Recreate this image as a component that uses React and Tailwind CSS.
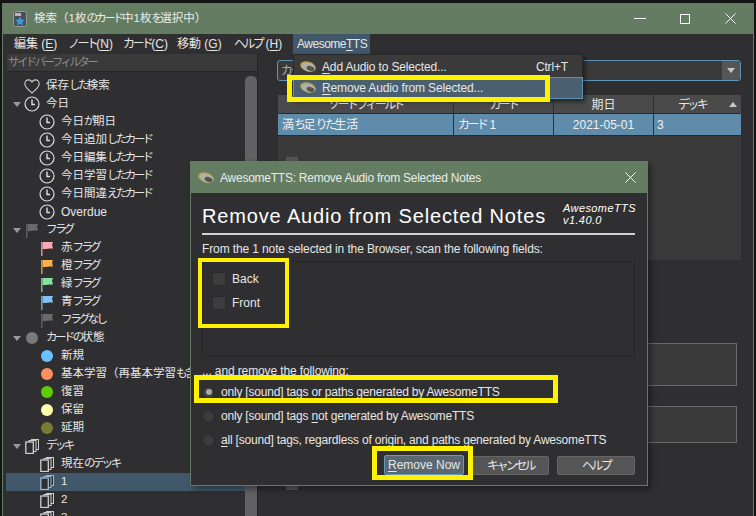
const font = "font-['Liberation_Sans','Noto_Sans_CJK_JP',sans-serif]";

function Arrow() {
  return (
    <svg width="8" height="5" viewBox="0 0 8 5">
      <path d="M0 0H8L4 5Z" fill="#9a9a9a" />
    </svg>
  );
}

function Clock() {
  return (
    <svg width="16" height="16" viewBox="0 0 16 16" fill="none" stroke="#dedede" strokeWidth="1.2">
      <circle cx="8" cy="8" r="7" />
      <path d="M8 3.500V8.500H11" strokeWidth="1.400" />
    </svg>
  );
}

function Heart() {
  return (
    <svg width="16" height="15" viewBox="0 0 16 15" fill="none" stroke="#cfcfcf" strokeWidth="1.100">
      <path d="M8 14C4 10.500 .8 8 .8 4.700 .8 2.400 2.600 .9 4.500 .9 6 .9 7.300 1.700 8 3 8.700 1.700 10 .9 11.500 .9 13.400 .9 15.200 2.400 15.200 4.700 15.200 8 12 10.500 8 14Z" />
    </svg>
  );
}

function Flag({ color }) {
  return (
    <svg width="14" height="15" viewBox="0 0 14 15">
      <rect x="1" y="1" width="1.600" height="14" fill={color} opacity="0.75" />
      <path d="M2.600 1H13L12 3.500 13 7.500C9 7 6 8.500 2.600 8Z" fill={color} />
    </svg>
  );
}

function Dot({ color }) {
  return <span className="block w-[12px] h-[12px] rounded-full" style={{ backgroundColor: color }} />;
}

function Deck({ color = "#cfcfcf" }) {
  return (
    <svg width="14" height="15" viewBox="0 0 14 15" fill="#2f2f31" stroke={color} strokeWidth="1">
      <rect x="6.500" y=".5" width="7" height="10" />
      <rect x="4" y="1.500" width="7" height="11" />
      <rect x=".8" y="3" width="7.500" height="11.500" strokeWidth="1.300" />
    </svg>
  );
}

function Speaker() {
  return (
    <svg width="17" height="14" viewBox="0 0 17 14" className="shrink-0">
      <ellipse cx="8" cy="6.500" rx="8" ry="5" transform="rotate(18 8 6.500)" fill="#b9a43e" />
      <ellipse cx="8.500" cy="7" rx="7" ry="4.200" transform="rotate(18 8.500 7)" fill="#b0b0a8" />
      <ellipse cx="10.500" cy="8.500" rx="4" ry="2.400" transform="rotate(18 10.500 8.500)" fill="#55554f" />
    </svg>
  );
}

function AppIcon() {
  return (
    <svg width="14" height="16" viewBox="0 0 14 16">
      <rect x=".5" y=".5" width="13" height="15" rx="2" fill="#4b4f55" stroke="#9a9a9a" />
      <rect x="2" y="2" width="6" height="3" fill="#b8b8b8" />
      <path d="M7 5.500 8.400 8.600 11.800 9 9.300 11.200 10 14.500 7 12.800 4 14.500 4.700 11.200 2.200 9 5.600 8.600Z" fill="#3d9be0" />
    </svg>
  );
}

// kana sits much tighter than kanji in the reference's UI font
function K({ children }) {
  return <span className="tracking-[-2.600px]">{children}</span>;
}

function Row({ level = 1, arrow, icon, children, selected }) {
  return (
    <div className={`flex items-center h-[18px] whitespace-nowrap ${level === 1 ? "pl-[33px]" : "pl-[4px]"} ${selected ? "bg-[#40586a]" : ""}`}>
      {level === 0 && (
        <span className="w-[14px] flex justify-center shrink-0">{arrow && <Arrow />}</span>
      )}
      <span className="w-[16px] flex justify-center items-center shrink-0 mr-[6px]">{icon}</span>
      <span>{children}</span>
    </div>
  );
}

function Mn({ children }) {
  return <span className="underline underline-offset-2">{children}</span>;
}

function Radio({ checked, children }) {
  return (
    <div className="flex items-center h-[24px] gap-[6px] whitespace-nowrap tracking-[-0.200px]">
      <span className="w-[13px] h-[13px] rounded-full bg-[#3c3c3c] border border-[#2a2a2a] flex items-center justify-center shrink-0">
        {checked && <span className="w-[6px] h-[6px] rounded-full bg-[#a8a8a8]" />}
      </span>
      <span>{children}</span>
    </div>
  );
}

function Check({ children }) {
  return (
    <div className="flex items-center h-[24px] gap-[6px]">
      <span className="w-[14px] h-[14px] bg-[#3c3c3c] border border-[#2a2a2a] rounded-[1px]" />
      <span>{children}</span>
    </div>
  );
}

export default function App() {
  return (
    <div className={`relative w-[756px] h-[516px] overflow-hidden bg-[#141414] pt-[3px] pl-[2px] text-[#e6e6e6] text-[12px] leading-none ${font}`}>
      {/* Browser window */}
      <div className="relative w-[752px] h-[513px] flex flex-col bg-[#2f2f31] border-x border-[#647c62]">
        <div className="h-[31px] bg-[#647c62] flex items-center pl-[10px] shrink-0">
          <AppIcon />
          <span className="ml-[7px] text-[#e8ece8] text-[11.500px]">検索（1枚<K>のカード</K>中1枚<K>を</K>選択中）</span>
          <div className="ml-auto flex items-center text-white">
            <span className="w-[12px] h-px bg-white" />
            <span className="w-[10px] h-[10px] border border-white ml-[34px]" />
            <svg className="ml-[35px] mr-[17px]" width="11" height="11" viewBox="0 0 11 11" stroke="#fff" strokeWidth="1">
              <path d="M.5 .5 10.500 10.500M10.500 .5 .5 10.500" />
            </svg>
          </div>
        </div>

        <div className="h-[20px] flex items-center shrink-0 pl-[11px] whitespace-nowrap">
          <span className="w-[54px]">編集 (<Mn>E</Mn>)</span>
          <span className="w-[55px]"><K>ノート</K>(<Mn>N</Mn>)</span>
          <span className="w-[54px]"><K>カード</K>(<Mn>C</Mn>)</span>
          <span className="w-[57px]">移動 (<Mn>G</Mn>)</span>
          <span className="w-[59px]"><K>ヘルプ</K> (<Mn>H</Mn>)</span>
          <span className="h-full flex items-center px-[4px] w-[77px] bg-[#40586a] tracking-[-0.500px]">Awesome<Mn>T</Mn>TS</span>
        </div>

        <div className="flex flex-1 min-h-0">
          {/* Sidebar */}
          <div className="w-[255px] shrink-0 flex flex-col border-r border-[#242424] overflow-hidden">
            <div className="ml-[4px] h-[18px] bg-[#3a3a3a] shrink-0 flex items-center pl-[1px] text-[#8c8c8c] text-[11.500px] border-b border-[#262626]">
              <K>サイドバーフィルター</K>
            </div>
            <div className="flex flex-1 pt-[4px] min-h-0">
              <div className="flex-1 min-w-0 ml-[3px] pt-px overflow-hidden text-[11.500px]">
                <Row level={0} icon={<Heart />}>保存<K>した</K>検索</Row>
                <Row level={0} arrow icon={<Clock />}>今日</Row>
                <Row icon={<Clock />}>今日<K>が</K>期日</Row>
                <Row icon={<Clock />}>今日追加<K>したカード</K></Row>
                <Row icon={<Clock />}>今日編集<K>したカード</K></Row>
                <Row icon={<Clock />}>今日学習<K>したカード</K></Row>
                <Row icon={<Clock />}>今日間違<K>えたカード</K></Row>
                <Row icon={<Clock />}><span className="text-[12px]">Overdue</span></Row>
                <Row level={0} arrow icon={<Flag color="#6a6a6a" />}><K>フラグ</K></Row>
                <Row icon={<Flag color="#ffa9b2" />}>赤<K>フラグ</K></Row>
                <Row icon={<Flag color="#ffb04a" />}>橙<K>フラグ</K></Row>
                <Row icon={<Flag color="#86e0a2" />}>緑<K>フラグ</K></Row>
                <Row icon={<Flag color="#82bff2" />}>青<K>フラグ</K></Row>
                <Row icon={<Flag color="#6a6a6a" />}><K>フラグなし</K></Row>
                <Row level={0} arrow icon={<Dot color="#7a7a7a" />}><K>カードの</K>状態</Row>
                <Row icon={<Dot color="#6cc0ff" />}>新規</Row>
                <Row icon={<Dot color="#ff8f5e" />}>基本学習（再基本学習<K>も</K>含む）</Row>
                <Row icon={<Dot color="#5fcc00" />}>復習</Row>
                <Row icon={<Dot color="#ffffb0" />}>保留</Row>
                <Row icon={<Dot color="#7a7a34" />}>延期</Row>
                <Row level={0} arrow icon={<Deck />}><K>デッキ</K></Row>
                <Row icon={<Deck />}>現在<K>のデッキ</K></Row>
                <Row selected icon={<Deck color="#9ab8cc" />}>1</Row>
                <Row icon={<Deck />}>2</Row>
                <Row icon={<Deck />}>3</Row>
              </div>
              <div className="w-[12px] shrink-0 bg-[#616161] rounded-t-[5px]" />
            </div>
          </div>

          {/* Card list */}
          <div className="flex-1 min-w-0 pt-[6px] pl-[19px] pr-[12px]">
            <div className="h-[21px] flex items-center bg-[#3a3a3a] border border-[#5e93b4] rounded-[3px] pl-[3px] text-[#aaa]">
              <K>カード</K>
              <span className="ml-auto w-[18px] h-full bg-[#555] flex items-center justify-center">
                <svg width="8" height="5" viewBox="0 0 8 5"><path d="M0 0H8L4 5Z" fill="#c8c8c8" /></svg>
              </span>
            </div>
            <div className="mt-[14px] ml-px h-[165px] bg-[#3a3a3a]">
              <div className="grid grid-cols-[176px_100px_100px_86px] h-[19px] bg-[#4a4a4a] text-center border-b border-[#2a2a2a]">
                <span className="border-r border-[#2f2f2f] leading-[20px]"><K>ソートフィールド</K></span>
                <span className="border-r border-[#2f2f2f] leading-[20px]"><K>カード</K></span>
                <span className="border-r border-[#2f2f2f] leading-[20px]">期日</span>
                <span className="relative leading-[20px] pr-[10px]">
                  <K>デッキ</K>
                  <svg className="absolute right-[3px] top-[7px]" width="8" height="5" viewBox="0 0 8 5"><path d="M0 5H8L4 0Z" fill="#c8c8c8" /></svg>
                </span>
              </div>
              <div className="grid grid-cols-[176px_100px_100px_86px] h-[22px] bg-[#5f8cab] text-[#f0f0f0] leading-[23px] border-b border-[#2a2a2a]">
                <span className="border-r border-[#2f2f2f] pl-[4px]">満<K>ち</K>足<K>りた</K>生活</span>
                <span className="border-r border-[#2f2f2f] pl-[4px]"><K>カード</K> 1</span>
                <span className="border-r border-[#2f2f2f] text-center">2021-05-01</span>
                <span className="pl-[3px]">3</span>
              </div>
            </div>
            <div className="mt-[83px] mr-[4px] h-[43px] bg-[#3a3a3a] border border-[#6a6a6a]" />
            <div className="mt-[20px] mr-[4px] h-[37px] bg-[#3a3a3a] border border-[#6a6a6a]" />
          </div>
        </div>

        {/* splitter handle, mostly hidden behind the dialog */}
        <div className="absolute left-[283px] top-[154px] w-[12px] h-[333px] bg-[#555]" />
      </div>

      {/* Menu */}
      <div className="absolute left-[293px] top-[54px] w-[290px] h-[46px] bg-[#3a3a3a] border border-[#2a2a2a] shadow-[2px_2px_4px_rgba(0,0,0,0.5)] pt-[1px] text-[12px] tracking-[-0.150px]">
        <div className="h-[21px] flex items-center pl-[6px]">
          <Speaker />
          <span className="ml-[5px]"><Mn>A</Mn>dd Audio to Selected...</span>
          <span className="ml-auto mr-[14px]">Ctrl+T</span>
        </div>
        <div className="h-[22px] flex items-center pl-[6px] bg-[#4a6070] border border-[#5e93b4] -ml-px -mr-px">
          <Speaker />
          <span className="ml-[5px]"><Mn>R</Mn>emove Audio from Selected...</span>
        </div>
      </div>

      {/* Dialog */}
      <div className="absolute left-[190px] top-[161px] w-[458px] h-[325px] bg-[#2f2f31] border border-[#647c62] shadow-[3px_3px_6px_rgba(0,0,0,0.4)] flex flex-col">
        <div className="h-[31px] shrink-0 bg-[#647c62] flex items-center pl-[7px] pr-[11px] text-[#e8ece8]">
          <Speaker />
          <span className="ml-[5px] tracking-[-0.250px]">AwesomeTTS: Remove Audio from Selected Notes</span>
          <svg className="ml-auto" width="11" height="11" viewBox="0 0 11 11" stroke="#fff" strokeWidth="1">
            <path d="M.5 .5 10.500 10.500M10.500 .5 .5 10.500" />
          </svg>
        </div>
        <div className="flex-1 flex flex-col pl-[11px] pr-[12px] pt-[11px]">
          <div className="flex items-end justify-between h-[31px] border-b-2 border-[#d0d0d0] pb-[7px]">
            <span className="text-[20px] text-white tracking-[0.850px] whitespace-nowrap">Remove Audio from Selected Notes</span>
            <span className="italic text-[11px] text-white leading-[12px] w-[72px] tracking-[0.400px]">AwesomeTTS<br />v1.40.0</span>
          </div>
          <p className="mt-[8px] tracking-[-0.120px]">From the 1 note selected in the Browser, scan the following fields:</p>
          <div className="mt-[6px] h-[95px] border border-[#262626] pl-[9px] pt-[5px]">
            <Check>Back</Check>
            <Check>Front</Check>
          </div>
          <p className="mt-[9px] tracking-[-0.120px]">... and remove the following:</p>
          <div className="mt-[3px]">
            <Radio checked>only [sound] tags or paths generated by Awesome<Mn>T</Mn>TS</Radio>
            <Radio>only [sound] tags <Mn>n</Mn>ot generated by AwesomeTTS</Radio>
            <Radio><Mn>a</Mn>ll [sound] tags, regardless of origin, and paths generated by AwesomeTTS</Radio>
          </div>
          <div className="mt-[3px] flex justify-end gap-[8px]">
            <button className="w-[80px] h-[20px] rounded-[2px] bg-[#5a6872] border border-[#6a9ab8]"><Mn>R</Mn>emove Now</button>
            <button className="w-[77px] h-[19px] mt-px rounded-[2px] bg-[#555] border border-[#666]"><K>キャンセル</K></button>
            <button className="w-[78px] h-[19px] mt-px rounded-[2px] bg-[#555] border border-[#666]"><K>ヘルプ</K></button>
          </div>
        </div>
      </div>

      {/* Yellow annotation boxes */}
      <div className="absolute left-[287px] top-[75px] w-[263px] h-[27px] border-[5px] border-[#fff200]" />
      <div className="absolute left-[198px] top-[258px] w-[91px] h-[70px] border-[4px] border-[#fff200]" />
      <div className="absolute left-[194px] top-[375px] w-[364px] h-[28px] border-[5px] border-[#fff200]" />
      <div className="absolute left-[372px] top-[446px] w-[101px] h-[34px] border-[5px] border-[#fff200]" />
    </div>
  );
}
